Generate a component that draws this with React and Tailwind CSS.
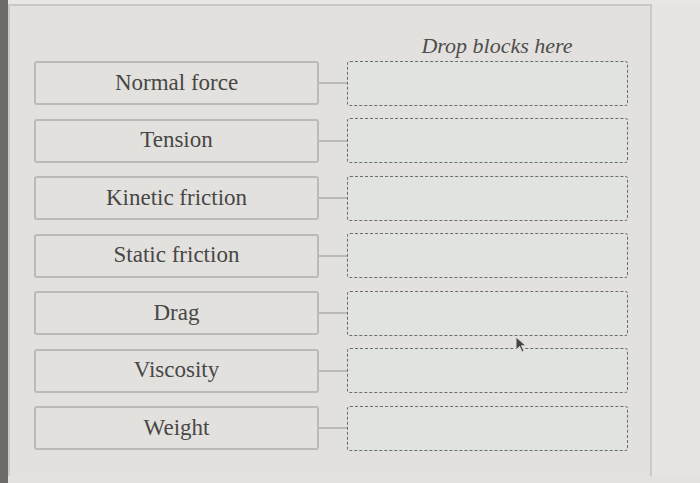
import React from "react";

const blocks = [
  "Normal force",
  "Tension",
  "Kinetic friction",
  "Static friction",
  "Drag",
  "Viscosity",
  "Weight",
];

const serif = { fontFamily: '"Liberation Serif", "DejaVu Serif", serif' };

function Row({ label }) {
  return (
    <div className="flex items-center h-[44px]">
      <div
        className="w-[285px] h-full flex items-center justify-center border-2 border-[#bcbab6] rounded-[3px] bg-[#e3e1dd] text-[#474747] text-[23px]"
        style={serif}
      >
        {label}
      </div>
      <div className="w-[28px] h-[2px] bg-[#bcbab6]" />
      <div className="w-[281px] h-[45px] border border-dashed border-[#6c6c6a] rounded-[3px] bg-[#e1e3e1]" />
    </div>
  );
}

export default function App() {
  return (
    <div className="w-[700px] h-[483px] bg-[#f0efec] overflow-hidden flex">
      {/* dark edge on the left */}
      <div className="w-[8px] h-full bg-[#6e6c69]" />
      <div className="flex-1 flex flex-col bg-[#e4e2df]">
        <div className="h-[4px] bg-[#e8e7e4]" />
        <div className="flex">
          <div className="relative w-[644px] h-[472px] border-t-2 border-r-2 border-l-2 border-[#cbc9c6] bg-[#e3e1dd] pl-[24px] pt-[26px]">
            <div className="flex">
              <div className="w-[313px]" />
              <div
                className="w-[300px] text-center italic text-[22px] leading-[28px] text-[#4e4e4e]"
                style={serif}
              >
                Drop blocks here
              </div>
            </div>
            <div className="flex flex-col gap-[13.5px] mt-[1px]">
              {blocks.map((b) => (
                <Row key={b} label={b} />
              ))}
            </div>
            {/* mouse pointer */}
            <svg
              className="absolute left-[505px] top-[330px]"
              width="14"
              height="18"
              viewBox="0 0 14 18"
            >
              <path
                d="M1 1 L1 14 L4.5 10.5 L7 16 L9 15 L6.5 9.8 L11 9.8 Z"
                fill="#444"
                stroke="#ddd"
                strokeWidth="1"
              />
            </svg>
          </div>
          <div className="flex-1 bg-[#e6e5e2]" />
        </div>
      </div>
    </div>
  );
}
